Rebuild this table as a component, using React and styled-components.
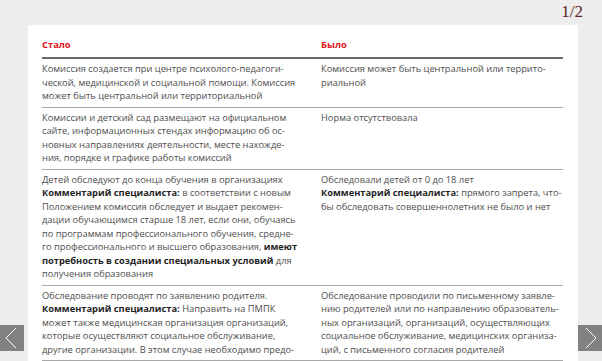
import { styled, createGlobalStyle } from "styled-components";

const GlobalStyle = createGlobalStyle`
  html, body {
    margin: 0;
    padding: 0;
    background: #ededed;
    overflow: hidden;
  }
  body {
    width: 602px;
    height: 361px;
  }
`;

const B = styled.b`
  font-weight: 700;
  color: #1f1f1f;
`;

const rows = [
  {
    now: [
      "Комиссия создается при центре психолого-педагоги-",
      "ческой, медицинской и социальной помощи. Комиссия",
      "может быть центральной или территориальной",
    ],
    was: ["Комиссия может быть центральной или террито-", "риальной"],
  },
  {
    now: [
      "Комиссии и детский сад размещают на официальном",
      "сайте, информационных стендах информацию об ос-",
      "новных направлениях деятельности, месте нахожде-",
      "ния, порядке и графике работы комиссий",
    ],
    was: ["Норма отсутствовала"],
  },
  {
    now: [
      "Детей обследуют до конца обучения в организациях",
      <>
        <B>Комментарий специалиста:</B> в соответствии с новым
      </>,
      "Положением комиссия обследует и выдает рекомен-",
      "дации обучающимся старше 18 лет, если они, обучаясь",
      "по программам профессионального обучения, средне-",
      <>
        го профессионального и высшего образования, <B>имеют</B>
      </>,
      <>
        <B>потребность в создании специальных условий</B> для
      </>,
      "получения образования",
    ],
    was: [
      "Обследовали детей от 0 до 18 лет",
      <>
        <B>Комментарий специалиста:</B> прямого запрета, что-
      </>,
      "бы обследовать совершеннолетних не было и нет",
    ],
  },
  {
    now: [
      "Обследование проводят по заявлению родителя.",
      <>
        <B>Комментарий специалиста:</B> Направить на ПМПК
      </>,
      "может также медицинская организация организаций,",
      "которые осуществляют социальное обслуживание,",
      "другие организации. В этом случае необходимо предо-",
    ],
    was: [
      "Обследование проводили по письменному заявле-",
      "нию родителей или по направлению образователь-",
      "ных организаций, организаций, осуществляющих",
      "социальное обслуживание, медицинских организа-",
      "ций, с письменного согласия родителей",
    ],
  },
];

const Arrow = ({ dir }) => (
  <svg width="24" height="26" viewBox="0 0 24 26">
    <polyline
      points={dir === "left" ? "16,3 6,13 16,23" : "8,3 18,13 8,23"}
      fill="none"
      stroke="#fff"
      strokeWidth="1"
    />
  </svg>
);

export default function App() {
  return (
    <>
      <GlobalStyle />
      <Screen>
        <TopBar>
          <PageNum>1/2</PageNum>
        </TopBar>
        <Sheet>
          <Table>
            <HeadRow>
              <Head>Стало</Head>
              <Head>Было</Head>
            </HeadRow>
            {rows.map((r, i) => (
              <Row key={i}>
                <Cell>
                  {r.now.map((l, j) => (
                    <Line key={j}>{l}</Line>
                  ))}
                </Cell>
                <Cell>
                  {r.was.map((l, j) => (
                    <Line key={j}>{l}</Line>
                  ))}
                </Cell>
              </Row>
            ))}
          </Table>
        </Sheet>
        <NavButton $side="left">
          <Arrow dir="left" />
        </NavButton>
        <NavButton $side="right">
          <Arrow dir="right" />
        </NavButton>
      </Screen>
    </>
  );
}

const Screen = styled.div`
  position: relative;
  width: 602px;
  height: 361px;
  overflow: hidden;
  display: flex;
  flex-direction: column;
`;

const TopBar = styled.div`
  height: 26px;
  display: flex;
  justify-content: flex-end;
  align-items: center;
  padding-right: 19px;
`;

const PageNum = styled.span`
  font-family: "Liberation Serif", serif;
  font-size: 17px;
  color: #5b2424;
  line-height: 1;
  margin-top: -2px;
`;

const Sheet = styled.div`
  margin: 0 24px 0 28px;
  flex: 1;
  background: #fff;
  padding: 13px 15px 0 14px;
`;

const Table = styled.div`
  font-family: "Open Sans", "Noto Sans", sans-serif;
  font-size: 9.3px;
  color: #4d4d4d;
`;

const HeadRow = styled.div`
  display: grid;
  grid-template-columns: 279px 1fr;
  border-bottom: 2px solid #6a6a6a;
  padding-bottom: 5px;
`;

const Head = styled.div`
  font-weight: 700;
  color: #e3131b;
  font-size: 9.4px;
  line-height: 14px;
`;

const Row = styled.div`
  display: grid;
  grid-template-columns: 279px 1fr;
  border-bottom: 1px solid #a8a8a8;
  padding: 3px 0 4px;
`;

const Cell = styled.div`
  display: flex;
  flex-direction: column;
`;

const Line = styled.div`
  white-space: nowrap;
  line-height: 13.5px;
`;

const NavButton = styled.div`
  position: absolute;
  top: 325px;
  ${(p) => (p.$side === "left" ? "left: 0;" : "right: 0;")}
  width: 24px;
  height: 26px;
  background: rgba(110, 110, 110, 0.85);
  display: flex;
  align-items: center;
  justify-content: center;
`;
